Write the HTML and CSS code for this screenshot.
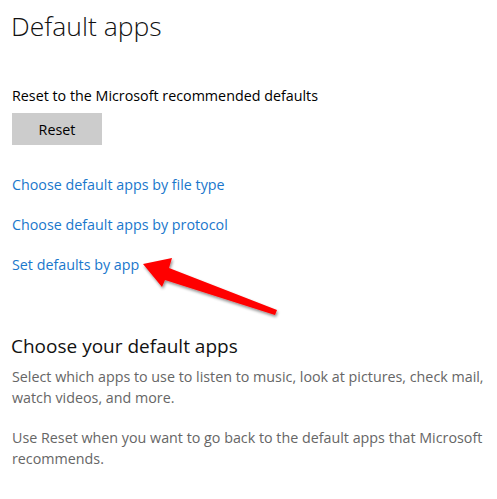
FILE: index.html
```html
<!DOCTYPE html>
<html>
<head>
<meta charset="utf-8">
<link rel="stylesheet" href="styles.css">
</head>
<body>
<div class="page">
  <h1 class="title">Default apps</h1>
  <p class="label">Reset to the Microsoft recommended defaults</p>
  <button class="btn">Reset</button>
  <div class="links">
    <a class="link">Choose default apps by file type</a>
    <a class="link">Choose default apps by protocol</a>
    <a class="link target">Set defaults by app</a>
  </div>
  <h2 class="sub">Choose your default apps</h2>
  <p class="desc">Select which apps to use to listen to music, look at pictures, check mail, watch videos, and more.</p>
  <p class="desc">Use Reset when you want to go back to the default apps that Microsoft recommends.</p>
</div>
<svg class="arrow" width="497" height="499" viewBox="0 0 497 499">
  <defs>
    <filter id="sh" x="-20%" y="-20%" width="140%" height="140%">
      <feGaussianBlur in="SourceAlpha" stdDeviation="1.5"/>
      <feOffset dx="1" dy="2"/>
      <feComponentTransfer><feFuncA type="linear" slope="0.45"/></feComponentTransfer>
      <feMerge><feMergeNode/><feMergeNode in="SourceGraphic"/></feMerge>
    </filter>
  </defs>
  <polygon filter="url(#sh)" fill="#ff0000" points="143,264 172,258 169,268 277,310 275,315 165,280 162,287"/>
</svg>
</body>
</html>
```
FILE: styles.css
```css
html, body { margin: 0; padding: 0; background: #fff; }
body { font-family: "Open Sans", "Noto Sans", sans-serif; }
.page { padding: 0 12px; display: flex; flex-direction: column; align-items: flex-start; }
.title { font-weight: 300; font-size: 26.5px; margin: 6px 0 0 -1px; color: #111; line-height: 40px; }
.label { font-size: 14.3px; margin: 40px 0 0 0; color: #000; line-height: 20px; }
.btn { font-family: inherit; font-size: 14.3px; background: #cccccc; border: none; width: 90px; height: 32px; margin-top: 7px; color: #000; padding: 0; }
.links { display: flex; flex-direction: column; gap: 20px; margin-top: 30px; }
.link { color: #1a77cc; font-size: 14.3px; line-height: 20px; }
.sub { font-weight: 400; font-size: 19px; margin: 57px 0 0 -1px; line-height: 28px; color: #111; }
.desc { font-size: 14.3px; color: #666; line-height: 21px; margin: 6px 0 0 0; max-width: 475px; }
.desc + .desc { margin-top: 19px; }
.arrow { position: absolute; left: 0; top: 0; pointer-events: none; }
```
